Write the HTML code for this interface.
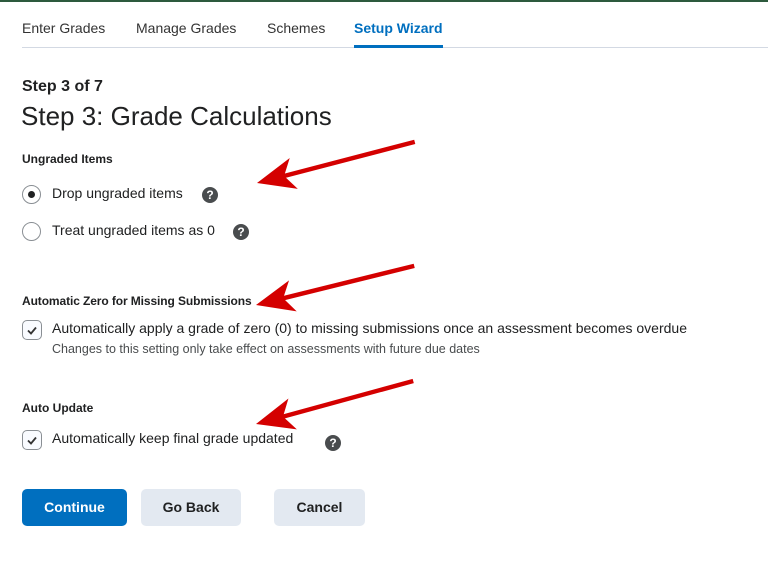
<!DOCTYPE html>
<html><head><meta charset="utf-8"><style>
body{margin:0;width:768px;height:564px;background:#fff;font-family:"Liberation Sans",sans-serif;color:#202122;position:relative;overflow:hidden}
.a{position:absolute;white-space:nowrap}
.topbar{position:absolute;left:0;top:0;width:768px;height:2px;background:#2d5a3d}
.tab{font-size:14px;color:#333;top:20px}
.rad{position:absolute;width:19px;height:19px;border:1px solid #8a8f94;border-radius:50%;box-sizing:border-box;background:#fff}
.chk{position:absolute;width:20px;height:20px;border:1px solid #8a8f94;border-radius:5px;box-sizing:border-box;background:#f9fbff}
.q{position:absolute;width:16px;height:16px;border-radius:50%;background:#494c4e;color:#fff;font-size:12px;font-weight:bold;text-align:center;line-height:16px}
.btn{position:absolute;top:489px;height:37px;border-radius:5px;font-size:14px;font-weight:bold;text-align:center;line-height:37px}
</style></head><body>
<div class="topbar"></div>
<div class="a tab" style="left:22px">Enter Grades</div>
<div class="a tab" style="left:136px">Manage Grades</div>
<div class="a tab" style="left:267px">Schemes</div>
<div class="a tab" style="left:354px;color:#006fbf;font-weight:bold">Setup Wizard</div>
<div style="position:absolute;left:22px;top:47px;width:746px;height:1px;background:#d3d9e3"></div>
<div style="position:absolute;left:354px;top:45px;width:89px;height:3px;background:#006fbf"></div>

<div class="a" style="left:22px;top:78px;font-size:16px;font-weight:bold">Step 3 of 7</div>
<div class="a" style="left:21px;top:101px;font-size:26px">Step 3: Grade Calculations</div>

<div class="a" style="left:22px;top:152px;font-size:12px;font-weight:bold">Ungraded Items</div>
<div class="rad" style="left:22px;top:185px"><div style="position:absolute;left:5px;top:5px;width:7px;height:7px;border-radius:50%;background:#202122"></div></div>
<div class="a" style="left:52px;top:185px;font-size:14px">Drop ungraded items</div>
<div class="q" style="left:202px;top:187px">?</div>
<div class="rad" style="left:22px;top:222px"></div>
<div class="a" style="left:52px;top:222px;font-size:14px">Treat ungraded items as 0</div>
<div class="q" style="left:233px;top:224px">?</div>

<div class="a" style="left:22px;top:294px;font-size:12px;font-weight:bold;letter-spacing:-0.1px">Automatic Zero for Missing Submissions</div>
<div class="chk" style="left:22px;top:320px"><svg width="18" height="18" style="position:absolute;left:0;top:0"><path d="M5 9.5l3 3 5-6" fill="none" stroke="#333" stroke-width="1.8"/></svg></div>
<div class="a" style="left:52px;top:320px;font-size:14px">Automatically apply a grade of zero (0) to missing submissions once an assessment becomes overdue</div>
<div class="a" style="left:52px;top:342px;font-size:12.5px;color:#494c4e">Changes to this setting only take effect on assessments with future due dates</div>

<div class="a" style="left:22px;top:401px;font-size:12px;font-weight:bold">Auto Update</div>
<div class="chk" style="left:22px;top:430px"><svg width="18" height="18" style="position:absolute;left:0;top:0"><path d="M5 9.5l3 3 5-6" fill="none" stroke="#333" stroke-width="1.8"/></svg></div>
<div class="a" style="left:52px;top:430px;font-size:14px">Automatically keep final grade updated</div>
<div class="q" style="left:325px;top:435px">?</div>

<div class="btn" style="left:22px;width:105px;background:#006fbf;color:#fff">Continue</div>
<div class="btn" style="left:141px;width:100px;background:#e3e9f1;color:#202122">Go Back</div>
<div class="btn" style="left:274px;width:91px;background:#e3e9f1;color:#202122">Cancel</div>

<svg width="768" height="564" style="position:absolute;left:0;top:0">
<g fill="#d40000">
<g transform="translate(257,183) rotate(-14.6)"><rect x="20" y="-2.2" width="143" height="4.4"/><path d="M0 0L38 -16L28 0L38 16Z"/></g>
<g transform="translate(256,305) rotate(-13.9)"><rect x="20" y="-2.2" width="143" height="4.4"/><path d="M0 0L38 -16L28 0L38 16Z"/></g>
<g transform="translate(256,424) rotate(-15.3)"><rect x="20" y="-2.2" width="143" height="4.4"/><path d="M0 0L38 -16L28 0L38 16Z"/></g>
</g>
</svg>
</body></html>
